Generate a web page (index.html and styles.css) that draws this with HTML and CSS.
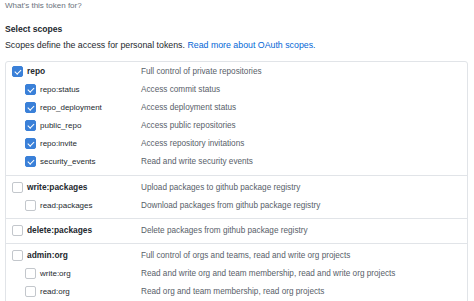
FILE: index.html
```html
<!DOCTYPE html>
<html>
<head>
<meta charset="utf-8">
<link rel="stylesheet" href="styles.css">
</head>
<body>
<div class="page">
  <p class="hint">What's this token for?</p>
  <h3 class="title">Select scopes</h3>
  <p class="lead">Scopes define the access for personal tokens. <a href="#">Read more about OAuth scopes.</a></p>
  <div class="scopes">
    <div class="group first">
      <div class="row parent"><span class="cb on"></span><span class="name">repo</span><span class="desc">Full control of private repositories</span></div>
      <div class="row child"><span class="cb on"></span><span class="name">repo:status</span><span class="desc">Access commit status</span></div>
      <div class="row child"><span class="cb on"></span><span class="name">repo_deployment</span><span class="desc">Access deployment status</span></div>
      <div class="row child"><span class="cb on"></span><span class="name">public_repo</span><span class="desc">Access public repositories</span></div>
      <div class="row child"><span class="cb on"></span><span class="name">repo:invite</span><span class="desc">Access repository invitations</span></div>
      <div class="row child"><span class="cb on"></span><span class="name">security_events</span><span class="desc">Read and write security events</span></div>
    </div>
    <div class="group">
      <div class="row parent"><span class="cb"></span><span class="name">write:packages</span><span class="desc">Upload packages to github package registry</span></div>
      <div class="row child"><span class="cb"></span><span class="name">read:packages</span><span class="desc">Download packages from github package registry</span></div>
    </div>
    <div class="group">
      <div class="row parent"><span class="cb"></span><span class="name">delete:packages</span><span class="desc">Delete packages from github package registry</span></div>
    </div>
    <div class="group">
      <div class="row parent"><span class="cb"></span><span class="name">admin:org</span><span class="desc">Full control of orgs and teams, read and write org projects</span></div>
      <div class="row child"><span class="cb"></span><span class="name">write:org</span><span class="desc">Read and write org and team membership, read and write org projects</span></div>
      <div class="row child"><span class="cb"></span><span class="name">read:org</span><span class="desc">Read org and team membership, read org projects</span></div>
    </div>
  </div>
</div>
</body>
</html>
```
FILE: styles.css
```css
html, body {
  margin: 0;
  padding: 0;
  background: #fff;
}
body {
  font-family: "Liberation Sans", Arial, sans-serif;
  color: #24292e;
  overflow: hidden;
}
.page {
  padding: 0 6px 0 5px;
}
.hint {
  margin: 0;
  padding-top: 1px;
  height: 21px;
  line-height: 10px;
  font-size: 8px;
  color: #6a737d;
}
.title {
  margin: 0;
  height: 18px;
  line-height: 14px;
  font-size: 8.6px;
  font-weight: bold;
}
.lead {
  margin: 0;
  height: 11px;
  line-height: 10px;
  font-size: 8.8px;
  color: #24292e;
}
.lead a {
  color: #0366d6;
  text-decoration: none;
}
.scopes {
  border: 1px solid #e1e4e8;
  border-radius: 3px;
  margin-top: 10px;
  height: 260px;
}
.group {
  padding: 2px 0 4px;
  border-top: 1px solid #e1e4e8;
}
.group.first {
  border-top: 0;
  padding-top: 0;
  padding-bottom: 5px;
}
.row {
  display: flex;
  align-items: center;
  height: 18px;
  font-size: 8.2px;
}
.row .name {
  font-size: 8px;
}
.parent {
  padding-left: 6px;
}
.child {
  padding-left: 19px;
}
.parent .name {
  width: 114px;
  font-weight: bold;
  font-size: 8.4px;
}
.child .name {
  width: 101px;
}
.cb {
  flex: none;
  width: 11px;
  height: 11px;
  box-sizing: border-box;
  border: 1px solid #c3c7cc;
  border-radius: 2px;
  background: #fff;
  margin-right: 4px;
  position: relative;
}
.cb.on {
  border-color: #3a80d8;
  background: #3a80d8;
}
.cb.on::after {
  content: "";
  position: absolute;
  left: 3px;
  top: 1px;
  width: 2.5px;
  height: 5px;
  border: solid #fff;
  border-width: 0 1.6px 1.6px 0;
  transform: rotate(45deg);
}
.desc {
  color: #586069;
  white-space: nowrap;
}
```
